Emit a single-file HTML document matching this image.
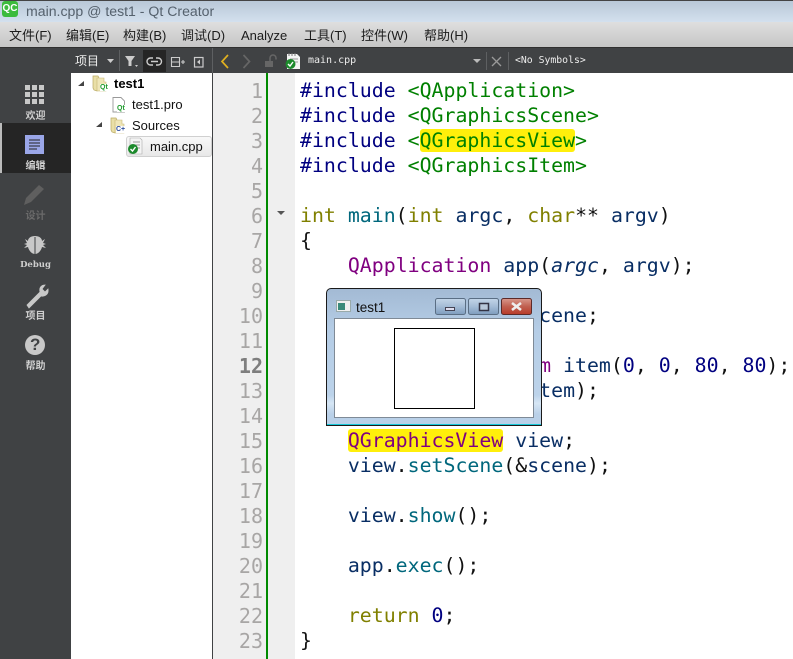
<!DOCTYPE html>
<html>
<head>
<meta charset="utf-8">
<style>
html,body{margin:0;padding:0;width:793px;height:659px;overflow:hidden;background:#fff}
body{position:relative;font-family:"Liberation Sans","Noto Sans CJK SC",sans-serif}
.a{position:absolute}
.t{position:absolute;white-space:pre}
#title{left:0;top:0;width:793px;height:22px;background:linear-gradient(#b9c8d7,#d3e0ee);border-top:1px solid #444;box-sizing:border-box}
#menu{left:0;top:22px;width:793px;height:26px;background:linear-gradient(#dfdfdf,#c6c6c6);border-bottom:1px solid #303030;box-sizing:border-box}
#menu span{position:absolute;top:6px;font-size:13px;line-height:16px;color:#1c1c1c;white-space:pre}
#tb{left:0;top:48px;width:793px;height:25px;background:#404244}
#side{left:0;top:73px;width:71px;height:586px;background:#404244}
.lab{position:absolute;left:0;width:71px;text-align:center;font-size:10px;font-weight:bold;line-height:12px;color:#cfcfcf;font-family:"WenQuanYi Zen Hei","Noto Sans CJK SC",sans-serif}
#tree{left:71px;top:73px;width:141px;height:586px;background:#fff;border-right:1px solid #404244}
.tr{position:absolute;font-size:13px;line-height:16px;color:#111;white-space:pre}
#gut{left:213px;top:73px;width:82px;height:586px;background:#efefef}
#grn{left:266px;top:73px;width:2px;height:586px;background:#008a00}
.n{position:absolute;left:213px;width:50px;text-align:right;font-family:"DejaVu Sans Mono",monospace;font-size:20px;line-height:25px;color:#a8a6a5}
pre{position:absolute;left:300px;top:78px;margin:0;font-family:"DejaVu Sans Mono",monospace;font-size:19.88px;line-height:25px;color:#111}
.p{color:#000080}.s{color:#008000}.k{color:#808000}.y{color:#800080}.f{color:#00677c}.v{color:#092e64}.i{font-style:italic;color:#092e64}
.h{background:#ffef0b;border-radius:3px}
</style>
</head>
<body>
<div class="a" id="title"></div>
<div class="a" style="left:2px;top:1px;width:16px;height:16px;background:#3cbb3c;border-radius:3px;color:#fff;font-size:10px;font-weight:bold;line-height:16px;text-align:center">QC</div>
<div class="t" style="left:26px;top:3px;font-size:14.1px;line-height:17px;color:#55616d">main.cpp @ test1 - Qt Creator</div>

<div class="a" id="menu">
<span style="left:9px">文件(F)</span><span style="left:66px">编辑(E)</span><span style="left:123px">构建(B)</span><span style="left:181px">调试(D)</span><span style="left:241px">Analyze</span><span style="left:304px">工具(T)</span><span style="left:361px">控件(W)</span><span style="left:424px">帮助(H)</span>
</div>

<div class="a" id="tb"></div>
<div class="t" style="left:75px;top:53px;font-size:12px;line-height:16px;color:#eee">项目</div>
<svg class="a" style="left:0;top:0" width="793" height="73">
<rect x="143" y="50" width="23" height="22" fill="#252525"/>
<path d="M107 59h7l-3.500 4z" fill="#ccc"/>
<path d="M119.500 50v21M212.500 48v25M486.500 52v18M508.500 52v18" stroke="#5e6062"/>
<path d="M125 56h10l-3.500 5v5h-3v-5z" fill="#ccc"/>
<path d="M135 65h3l-1.500 2z" fill="#ccc"/>
<path d="M153 58h-2.500a3.200 3.200 0 0 0 0 7H153M156 58h2a3.200 3.200 0 0 1 0 7h-2M151 61.500h7" fill="none" stroke="#ccc" stroke-width="1.400"/>
<path d="M171.500 57.500h8v9h-8zM171.500 62h8" fill="none" stroke="#ccc" stroke-width="1.100"/>
<path d="M181 62h4M183 60v4" stroke="#ccc" stroke-width="1.100"/>
<rect x="194.500" y="57.500" width="8.500" height="9.500" fill="none" stroke="#ccc" stroke-width="1.200"/>
<path d="M200 59.500l-3 2.500 3 2.500z" fill="#ccc"/>
<path d="M228 55l-6 6.500 6 6.500" fill="none" stroke="#e0b020" stroke-width="1.700"/>
<path d="M243.500 55l6 6.500-6 6.500" fill="none" stroke="#666" stroke-width="1.700"/>
<rect x="265" y="61" width="8" height="6" fill="#666"/>
<path d="M270 61v-3a3 3 0 0 1 6 0v1.500" fill="none" stroke="#666" stroke-width="1.500"/>
<path d="M287 54h10l3 3v12h-13z" fill="#f4f4f4"/>
<path d="M289 53v3M292 53v3M295 53v3" stroke="#777"/>
<path d="M290 59h8M290 62h8" stroke="#999"/>
<circle cx="290.500" cy="64" r="5" fill="#1c8a2c"/>
<path d="M288 64l2 2 3-4" stroke="#fff" stroke-width="1.400" fill="none"/>
<path d="M473 59h8l-4 4z" fill="#bbb"/>
<path d="M492 57l9 9M501 57l-9 9" stroke="#9a9a9a" stroke-width="1.300"/>
</svg>
<div class="t" style="left:308px;top:54px;font-family:'DejaVu Sans Mono',monospace;font-size:10px;line-height:14px;color:#eee">main.cpp</div>
<div class="t" style="left:515px;top:54px;font-family:'DejaVu Sans Mono',monospace;font-size:9.800px;line-height:14px;color:#eee">&lt;No Symbols&gt;</div>

<div class="a" id="side">
<div class="a" style="left:0;top:50px;width:71px;height:50px;background:#252525"></div>
<div class="a" style="left:0;top:50px;width:2px;height:50px;background:#bbb"></div>
</div>
<svg class="a" style="left:0;top:73px" width="71" height="310">
<g fill="#c8c8c8">
<rect x="25" y="12" width="5" height="5"/><rect x="32" y="12" width="5" height="5"/><rect x="39" y="12" width="5" height="5"/>
<rect x="25" y="19" width="5" height="5"/><rect x="32" y="19" width="5" height="5"/><rect x="39" y="19" width="5" height="5"/>
<rect x="25" y="26" width="5" height="5"/><rect x="32" y="26" width="5" height="5"/><rect x="39" y="26" width="5" height="5"/>
</g>
<rect x="25" y="62" width="19" height="19" fill="#9aa6e8"/>
<path d="M29 67h11M29 70h11M29 73h11M29 76h8" stroke="#222" stroke-width="1"/>
<path d="M24 132l2-7 13-13 5 4-13 13z" fill="#5f5f5f"/>
<path d="M35 163c-4 0-7 2-7 5l-3-2 2 4-3 1 3 1-3 3 4-1c1 4 4 7 7 7s6-3 7-7l4 1-3-3 3-1-3-1 2-4-3 2c0-3-3-5-7-5z" fill="#c8c8c8"/>
<path d="M35 164v17" stroke="#404244" stroke-width="1"/>
<path d="M27 232l13-13c-1-4 1-7 5-7l-3 4 3 3 3-3c1 5-3 8-7 7l-12 12z" fill="#c8c8c8" stroke="#c8c8c8" stroke-width=".8"/>
<circle cx="35" cy="272" r="10" fill="#c8c8c8"/>
</svg>
<div class="t" style="left:30px;top:335px;font-size:17px;line-height:20px;font-weight:bold;color:#404244">?</div>
<div class="lab" style="top:109px">欢迎</div>
<div class="lab" style="top:159px">编辑</div>
<div class="lab" style="top:209px;color:#6a6a6a">设计</div>
<div class="lab" style="top:259px;font-family:'DejaVu Serif','Liberation Serif',serif;font-size:8.500px">Debug</div>
<div class="lab" style="top:309px">项目</div>
<div class="lab" style="top:359px">帮助</div>

<div class="a" id="tree"></div>
<svg class="a" style="left:0;top:0" width="213" height="160">
<path d="M78 86l6-5v5zM96 127l6-5v5z" fill="#444"/>
<path d="M93 76h5l1 2v11l-2 2-3-1-1-2z" fill="#e9dfa7" stroke="#b9a962" stroke-width=".7"/>
<path d="M97 78h7v4h2v9h-9z" fill="#efe6b8" stroke="#c7b774" stroke-width=".6"/>
<rect x="100" y="84" width="7" height="7" fill="#fff"/>
<path d="M113 97.500h8l3.500 3.500v11h-11.500z" fill="#fff" stroke="#999" stroke-width=".9"/>
<rect x="117" y="105" width="8" height="7" fill="#fff"/>
<path d="M111 118h5l1 2v11l-2 2-3-1-1-2z" fill="#e9dfa7" stroke="#b9a962" stroke-width=".7"/>
<path d="M115 120h7v4h2v9h-9z" fill="#efe6b8" stroke="#c7b774" stroke-width=".6"/>
<rect x="116" y="126" width="9" height="7" fill="#fff"/>
</svg>
<div class="t" style="left:100px;top:84px;font-size:7px;line-height:8px;font-weight:bold;color:#1e9a2c">Qt</div>
<div class="t" style="left:117px;top:105px;font-size:7px;line-height:8px;font-weight:bold;color:#1e9a2c">Qt</div>
<div class="t" style="left:116px;top:126px;font-size:7px;line-height:8px;font-weight:bold;color:#2a4a9a">C+</div>
<div class="tr" style="left:114px;top:76px;font-weight:bold;color:#000">test1</div>
<div class="tr" style="left:132px;top:97px">test1.pro</div>
<div class="tr" style="left:132px;top:118px">Sources</div>
<div class="a" style="left:126px;top:136px;width:86px;height:21px;background:linear-gradient(#f8f8f8,#e8e8e8);border:1px solid #d0d0d0;border-radius:3px;box-sizing:border-box"></div>
<svg class="a" style="left:127px;top:137px" width="18" height="19">
<path d="M3 1h10l2 2v14H3z" fill="#f4f4f4" stroke="#aaa" stroke-width=".6"/>
<path d="M6 5h7M6 8h7M8 11h5" stroke="#999"/>
<circle cx="6" cy="12" r="5" fill="#1c8a2c"/>
<path d="M3.500 12l2 2 3-4" stroke="#fff" stroke-width="1.400" fill="none"/>
</svg>
<div class="tr" style="left:150px;top:139px">main.cpp</div>

<div class="a" id="gut"></div>
<div class="a" id="grn"></div>
<svg class="a" style="left:276px;top:210px" width="12" height="8"><path d="M1 1h8l-4 4z" fill="#555"/></svg>
<div class="n" style="top:79px">1</div><div class="n" style="top:104px">2</div><div class="n" style="top:129px">3</div><div class="n" style="top:154px">4</div><div class="n" style="top:179px">5</div><div class="n" style="top:204px">6</div><div class="n" style="top:229px">7</div><div class="n" style="top:254px">8</div><div class="n" style="top:279px">9</div><div class="n" style="top:304px">10</div><div class="n" style="top:329px">11</div><div class="n" style="top:354px;font-weight:bold;color:#7e7e7e">12</div><div class="n" style="top:379px">13</div><div class="n" style="top:404px">14</div><div class="n" style="top:429px">15</div><div class="n" style="top:454px">16</div><div class="n" style="top:479px">17</div><div class="n" style="top:504px">18</div><div class="n" style="top:529px">19</div><div class="n" style="top:554px">20</div><div class="n" style="top:579px">21</div><div class="n" style="top:604px">22</div><div class="n" style="top:629px">23</div>

<pre><span class="p">#include</span> <span class="s">&lt;QApplication&gt;</span>
<span class="p">#include</span> <span class="s">&lt;QGraphicsScene&gt;</span>
<span class="p">#include</span> <span class="s">&lt;<span class="h">QGraphicsView</span>&gt;</span>
<span class="p">#include</span> <span class="s">&lt;QGraphicsItem&gt;</span>

<span class="k">int</span> <span class="f">main</span>(<span class="k">int</span> <span class="v">argc</span>, <span class="k">char</span>** <span class="v">argv</span>)
{
    <span class="y">QApplication</span> <span class="v">app</span>(<span class="i">argc</span>, <span class="v">argv</span>);

    <span class="y">QGraphicsScene</span> <span class="v">scene</span>;

    <span class="y">QGraphicsRectItem</span> <span class="v">item</span>(<span class="p">0</span>, <span class="p">0</span>, <span class="p">80</span>, <span class="p">80</span>);
    <span class="v">scene</span>.<span class="f">addItem</span>(&amp;<span class="v">item</span>);

    <span class="y h">QGraphicsView</span> <span class="v">view</span>;
    <span class="v">view</span>.<span class="f">setScene</span>(&amp;<span class="v">scene</span>);

    <span class="v">view</span>.<span class="f">show</span>();

    <span class="v">app</span>.<span class="f">exec</span>();

    <span class="k">return</span> <span class="p">0</span>;
}</pre>

<div class="a" style="left:326px;top:288px;width:216px;height:138px;box-sizing:border-box;border:1px solid #1a1a1a;border-radius:5px 5px 0 0;background:linear-gradient(#a3bad4 0,#b5cde6 30%,#bcd3ea 78%,#d6e6f5 84%,#b9d0e8 92%,#b9d0e8 100%);box-shadow:inset 0 -1px 0 #14c8d8"></div>
<div class="a" style="left:334px;top:318px;width:200px;height:100px;box-sizing:border-box;background:#fff;border:1px solid #7f8a96"></div>
<div class="a" style="left:394px;top:328px;width:81px;height:81px;box-sizing:border-box;border:1px solid #000;background:#fff"></div>
<svg class="a" style="left:336px;top:300px" width="16" height="13"><rect x=".5" y=".5" width="14" height="11" fill="#f0f0f0" stroke="#9aa"/><rect x="2" y="3" width="7" height="7" fill="#3a8a7a"/></svg>
<div class="t" style="left:356px;top:300px;font-size:13.500px;line-height:16px;color:#111">test1</div>
<svg class="a" style="left:435px;top:298px" width="98" height="18">
<defs>
<linearGradient id="b" x1="0" y1="0" x2="0" y2="1"><stop offset="0" stop-color="#c3d5e8"/><stop offset=".5" stop-color="#a4bcd6"/><stop offset="1" stop-color="#7e9cbd"/></linearGradient>
<linearGradient id="r" x1="0" y1="0" x2="0" y2="1"><stop offset="0" stop-color="#d8988c"/><stop offset=".5" stop-color="#c06050"/><stop offset="1" stop-color="#b83a28"/></linearGradient>
</defs>
<rect x=".5" y=".5" width="30" height="16" rx="2" fill="url(#b)" stroke="#5a6e84"/>
<rect x="33.500" y=".5" width="30" height="16" rx="2" fill="url(#b)" stroke="#5a6e84"/>
<rect x="66.500" y=".5" width="30" height="16" rx="2" fill="url(#r)" stroke="#5c2a28"/>
<rect x="10.500" y="9.500" width="9" height="3" fill="#dde" stroke="#445"/>
<rect x="44.500" y="5.500" width="9" height="7" fill="#b8c8da" stroke="#334" stroke-width="1.500"/>
<path d="M77 5l9 7M86 5l-9 7" stroke="#eee" stroke-width="2.600"/>
</svg>
</body>
</html>
